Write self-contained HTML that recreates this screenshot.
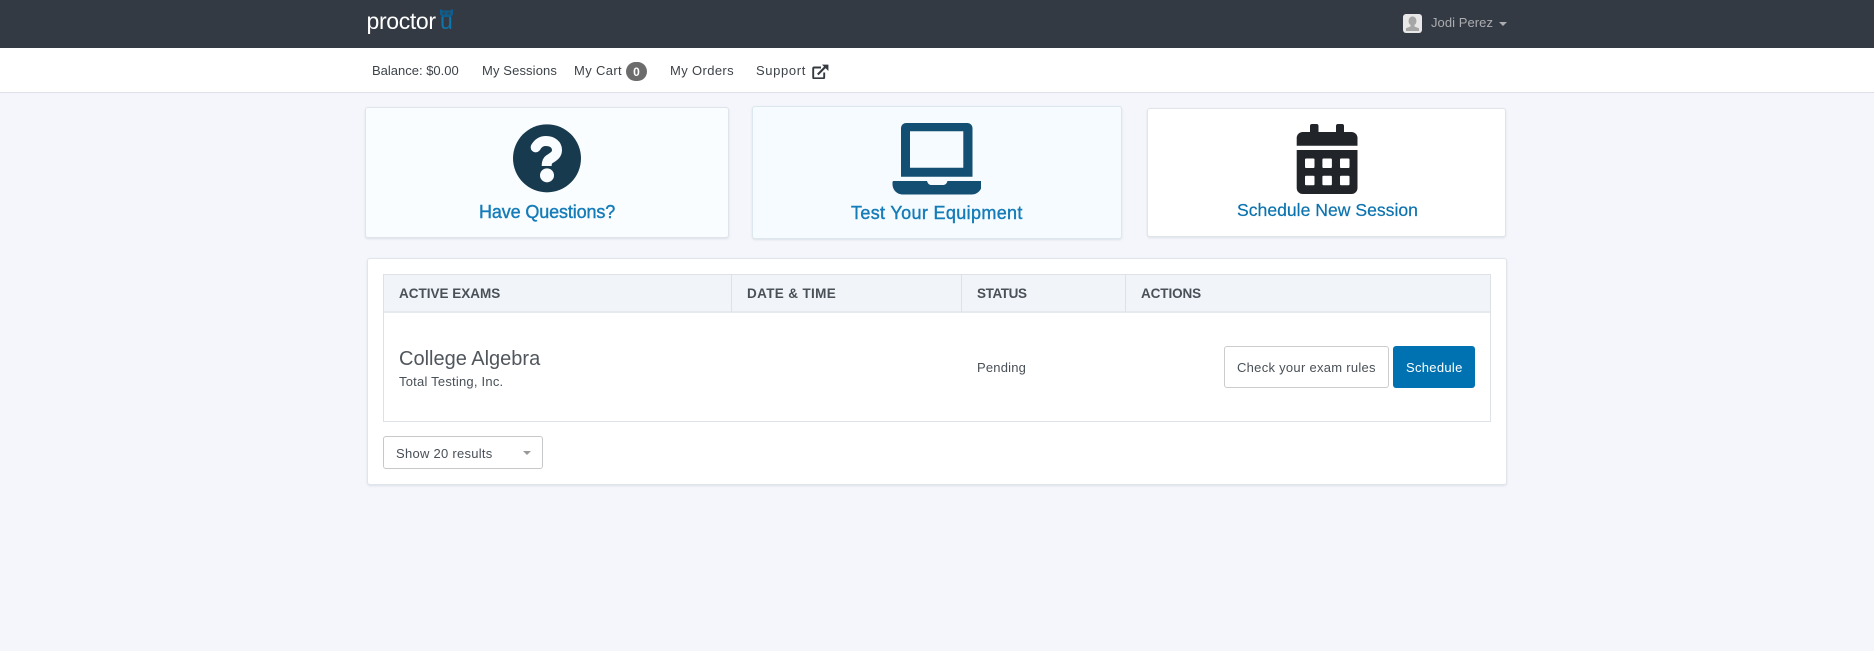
<!DOCTYPE html>
<html lang="en">
<head>
<meta charset="utf-8">
<title>ProctorU</title>
<style>
html,body{margin:0;padding:0;width:1874px;height:651px;overflow:hidden;background:#f4f6fb;font-family:"Liberation Sans",sans-serif;color:#495057}
.a,.t{position:absolute;box-sizing:border-box}
.t{white-space:nowrap;line-height:1;font-size:13px}
.nav{color:#3d4349}
.card{border-radius:3px;border:1px solid #dfe5ea;box-shadow:0 1px 2px rgba(60,80,100,.12)}
.ct{color:#157cb8;font-size:18px;-webkit-text-stroke:.4px #157cb8}
.th{font-weight:bold;font-size:13.5px;color:#495057}
svg{position:absolute;display:block}
</style>
</head>
<body>
<div class="a" style="left:0;top:0;width:1874px;height:48px;background:#343a43"></div>
<div class="a" style="left:0;top:48px;width:1874px;height:45px;background:#fff;border-bottom:1px solid #dde1e7"></div>

<span class="t" style="left:366.500px;top:10px;font-size:23px;color:#fff;letter-spacing:-.35px">proctor</span>
<span class="t" style="left:440px;top:10px;font-size:23px;color:#0f75ad">u</span>
<svg style="left:439px;top:9px" width="15" height="8" viewBox="0 0 15 8"><path d="M1 0l2.500 1.500h8L14 0v5.500L11.500 8h-8L1 5.500z" fill="#0c5f8f"/><circle cx="5" cy="4.300" r="1.800" fill="#2a4a60"/><circle cx="10" cy="4.300" r="1.800" fill="#2a4a60"/></svg>

<div class="a" style="left:1403px;top:14px;width:19px;height:19px;border-radius:3px;background:#e8e8e8;overflow:hidden">
<svg style="left:0;top:0" width="19" height="19" viewBox="0 0 19 19"><ellipse cx="9.500" cy="7" rx="4" ry="4.600" fill="#a6a6a6"/><path d="M7.500 10h4v2.500l4.500 1.800V17H3v-2.700l4.500-1.800z" fill="#a6a6a6"/></svg>
</div>
<span class="t" style="left:1431px;top:16px;color:#abadb0;letter-spacing:.06px">Jodi Perez</span>
<div class="a" style="left:1499px;top:22px;width:0;height:0;border-left:4px solid transparent;border-right:4px solid transparent;border-top:4px solid #abadb0"></div>

<span class="t nav" style="left:372px;top:64px">Balance: $0.00</span>
<span class="t nav" style="left:482px;top:64px;letter-spacing:.12px">My Sessions</span>
<span class="t nav" style="left:574px;top:64px;letter-spacing:.36px">My Cart</span>
<div class="a" style="left:626px;top:62px;width:21px;height:19px;border-radius:10px;background:#6c6c6c;color:#fff;font-size:12px;font-weight:bold;text-align:center;line-height:20px">0</div>
<span class="t nav" style="left:670px;top:64px;letter-spacing:.37px">My Orders</span>
<span class="t nav" style="left:756px;top:64px;letter-spacing:.64px">Support</span>
<svg style="left:812px;top:64px" width="17" height="15" viewBox="0 0 17 15"><path d="M9 3.500H2.200a1 1 0 0 0-1 1v8.800a1 1 0 0 0 1 1h9a1 1 0 0 0 1-1V8.500" fill="none" stroke="#343a40" stroke-width="1.900"/><path d="M5.800 10.500L13.200 3" fill="none" stroke="#343a40" stroke-width="2.100"/><path d="M10 .6h6.400V7z" fill="#343a40"/></svg>

<div class="a card" style="left:365px;top:107px;width:364px;height:131px;background:#fafdff"></div>
<svg style="left:510px;top:122px" width="74" height="74" viewBox="0 0 222 222"><circle cx="111" cy="109" r="102" fill="#183a4e"/><circle cx="77" cy="76" r="15" fill="#fafdff"/><path d="M77 76C85 62 95 57 108 57c19 0 33 11 33 27 0 16-13 21-23 28-6 4-8 10-8 20" fill="none" stroke="#fafdff" stroke-width="30"/><circle cx="111" cy="160" r="21" fill="#fafdff"/></svg>
<span class="t ct" style="left:479px;top:203px;letter-spacing:-.13px">Have Questions?</span>

<div class="a card" style="left:752px;top:106px;width:370px;height:133px;background:#f5fbfe;border-color:#dce8ee"></div>
<svg style="left:892px;top:123px" width="89" height="72" viewBox="0 0 89 72"><path fill-rule="evenodd" fill="#134f73" d="M14 0h61.500a5 5 0 0 1 5 5v48.700H9V5a5 5 0 0 1 5-5zM18 8.300V44.700H71.300V8.300z"/><path fill="#134f73" d="M1.500 58h33.500c1 3 2.300 4 4.500 4h11.500c2.200 0 3.500-1 4.500-4h33c1 0 1.500.6 1.500 1.500v1.500c0 6-4.500 10.500-10.500 10.500H11c-6 0-10.500-4.500-10.500-10.500v-1.500c0-.9.400-1.500 1-1.500z"/></svg>
<span class="t ct" style="left:851px;top:204px;letter-spacing:.35px">Test Your Equipment</span>

<div class="a card" style="left:1147px;top:108px;width:359px;height:129px;background:#fff"></div>
<svg style="left:1296px;top:124px" width="62" height="70" viewBox="0 0 62 70"><path fill="#212529" fill-rule="evenodd" d="M14 2a2 2 0 0 1 2-2h4.500a2 2 0 0 1 2 2v6h17.500V2a2 2 0 0 1 2-2H46a2 2 0 0 1 2 2v6h7.500a6 6 0 0 1 6 6v7.700H.7V14a6 6 0 0 1 6-6H14zM.7 26H61.500v38a6 6 0 0 1-6 6H6.700a6 6 0 0 1-6-6zM10 34.500a1 1 0 0 0-1 1v7.500a1 1 0 0 0 1 1h7.500a1 1 0 0 0 1-1v-7.500a1 1 0 0 0-1-1zM27.400 34.500a1 1 0 0 0-1 1v7.500a1 1 0 0 0 1 1h7.500a1 1 0 0 0 1-1v-7.500a1 1 0 0 0-1-1zM45 34.500a1 1 0 0 0-1 1v7.500a1 1 0 0 0 1 1h7.500a1 1 0 0 0 1-1v-7.500a1 1 0 0 0-1-1zM10 51.800a1 1 0 0 0-1 1v7.500a1 1 0 0 0 1 1h7.500a1 1 0 0 0 1-1v-7.500a1 1 0 0 0-1-1zM27.400 51.800a1 1 0 0 0-1 1v7.500a1 1 0 0 0 1 1h7.500a1 1 0 0 0 1-1v-7.500a1 1 0 0 0-1-1zM45 51.800a1 1 0 0 0-1 1v7.500a1 1 0 0 0 1 1h7.500a1 1 0 0 0 1-1v-7.500a1 1 0 0 0-1-1z"/></svg>
<span class="t ct" style="left:1237px;top:202px;font-size:17.600px;-webkit-text-stroke:.2px #0a72ae;color:#0a72ae">Schedule New Session</span>

<div class="a card" style="left:367px;top:258px;width:1140px;height:227px;background:#fff"></div>
<div class="a" style="left:383px;top:274px;width:1108px;height:148px;border:1px solid #dee2e6;background:#fff"></div>
<div class="a" style="left:384px;top:275px;width:1106px;height:38px;background:#f1f4f9;border-bottom:2px solid #e6eaef"></div>
<div class="a" style="left:731px;top:275px;width:1px;height:37px;background:#dee2e6"></div>
<div class="a" style="left:961px;top:275px;width:1px;height:37px;background:#dee2e6"></div>
<div class="a" style="left:1125px;top:275px;width:1px;height:37px;background:#dee2e6"></div>

<span class="t th" style="left:399px;top:287px">ACTIVE EXAMS</span>
<span class="t th" style="left:747px;top:287px;letter-spacing:.35px">DATE &amp; TIME</span>
<span class="t th" style="left:977px;top:287px;letter-spacing:-.4px">STATUS</span>
<span class="t th" style="left:1141px;top:287px;letter-spacing:-.1px">ACTIONS</span>

<span class="t" style="left:399px;top:349px;font-size:20px;color:#50565c">College Algebra</span>
<span class="t" style="left:399px;top:375px;letter-spacing:.22px">Total Testing, Inc.</span>
<span class="t" style="left:977px;top:361px;letter-spacing:.2px">Pending</span>

<div class="a" style="left:1224px;top:346px;width:165px;height:42px;background:#fff;border:1px solid #ccc;border-radius:3px"></div>
<span class="t" style="left:1237px;top:361px;letter-spacing:.28px">Check your exam rules</span>
<div class="a" style="left:1393px;top:346px;width:82px;height:42px;background:#0072b1;border-radius:3px"></div>
<span class="t" style="left:1406px;top:361px;letter-spacing:.3px;color:#fff">Schedule</span>

<div class="a" style="left:383px;top:436px;width:160px;height:33px;background:#fff;border:1px solid #c6c8ca;border-radius:3px"></div>
<span class="t" style="left:396px;top:447px;letter-spacing:.27px">Show 20 results</span>
<div class="a" style="left:523px;top:451px;width:0;height:0;border-left:4px solid transparent;border-right:4px solid transparent;border-top:4px solid #999"></div>
</body>
</html>
